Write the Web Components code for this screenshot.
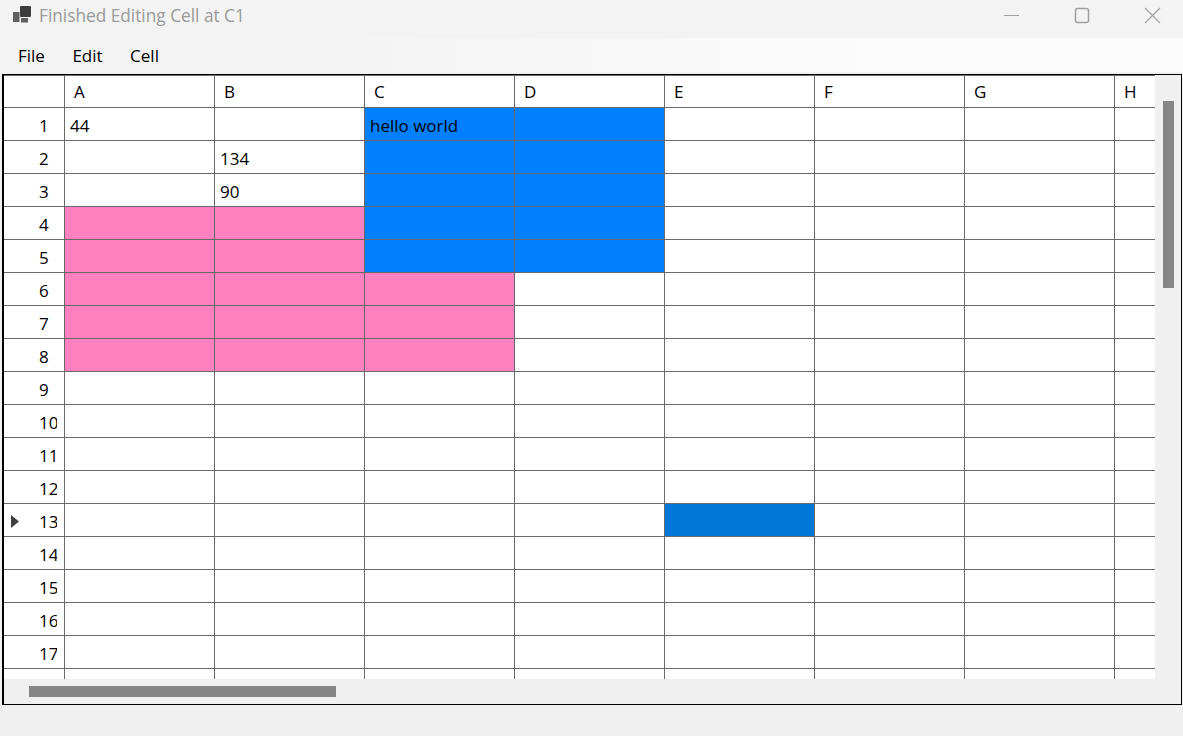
<!DOCTYPE html>
<html lang="en">
<head>
  <meta charset="UTF-8">
  <title>Finished Editing Cell at C1</title>
  <style>
    html, body { margin: 0; height: 100%; background: #f0f0f0; overflow: hidden; }
    body { font-family: "Open Sans", "Noto Sans", sans-serif; }
  </style>
</head>
<body>
  <app-window>
    <title-bar slot="title">Finished Editing Cell at C1</title-bar>
    <menu-bar slot="menu">
      <menu-item>File</menu-item>
      <menu-item>Edit</menu-item>
      <menu-item>Cell</menu-item>
    </menu-bar>
    <data-grid slot="body"></data-grid>
  </app-window>

  <script>
    class AppWindow extends HTMLElement {
      constructor() {
        super();
        this.attachShadow({ mode: 'open' });
        this.shadowRoot.innerHTML = `
          <style>
            :host { display: block; width: 1183px; height: 736px; background: #f0f0f0; }
            .frame { margin: 2px 2px 0 2px; }
          </style>
          <slot name="title"></slot>
          <slot name="menu"></slot>
          <div class="frame"><slot name="body"></slot></div>
        `;
      }
    }

    class TitleBar extends HTMLElement {
      constructor() {
        super();
        this.attachShadow({ mode: 'open' });
        this.shadowRoot.innerHTML = `
          <style>
            :host { display: flex; align-items: flex-start; height: 38px; background: #f3f3f3; color: #9a9a9a; font-size: 17.25px; }
            .logo { width: 18px; height: 18px; margin: 6px 8px 0 13px; flex: none; }
            .text { flex: 1; line-height: 32px; }
            .controls { display: flex; }
            .controls svg { width: 71px; height: 32px; display: block; }
          </style>
          <svg class="logo" viewBox="0 0 18 18">
            <rect x="0" y="6" width="6.5" height="10" fill="#5f5f5f"/>
            <rect x="7" y="0" width="11" height="11" rx="1" fill="#3d3d3d"/>
            <rect x="8" y="12" width="7" height="4.5" fill="#5f5f5f"/>
          </svg>
          <div class="text"><slot></slot></div>
          <div class="controls">
            <svg viewBox="0 0 71 32"><path d="M34 15.5h15" stroke="#a0a0a0" fill="none"/></svg>
            <svg viewBox="0 0 71 32"><rect x="34.5" y="8.5" width="13" height="14" rx="2" stroke="#a0a0a0" stroke-width="1.5" fill="none"/></svg>
            <svg viewBox="0 0 71 32"><path d="M33 8l15 15M48 8L33 23" stroke="#a0a0a0" stroke-width="1.2" fill="none"/></svg>
          </div>
        `;
      }
    }

    class MenuBar extends HTMLElement {
      constructor() {
        super();
        this.attachShadow({ mode: 'open' });
        this.shadowRoot.innerHTML = `
          <style>
            :host { display: flex; align-items: center; height: 34px; padding-left: 5px; background: linear-gradient(to right, #f3f3f3, #f3f3f3 25%, #fcfcfc 75%); }
          </style>
          <slot></slot>
        `;
      }
    }

    class MenuItem extends HTMLElement {
      constructor() {
        super();
        this.attachShadow({ mode: 'open' });
        this.shadowRoot.innerHTML = `
          <style>
            :host { display: block; padding: 0 14.5px 0 13px; font-size: 17px; color: #000; }
          </style>
          <slot></slot>
        `;
      }
    }

    // fills: column letter + row number -> colour
    const PINK = '#ff80bf', BLUE = '#0080ff', SELECTED = '#0078d7';
    const FILLS = { E13: SELECTED };
    for (const c of 'CD') for (let r = 1; r <= 5; r++) FILLS[c + r] = BLUE;
    for (const c of 'AB') for (let r = 4; r <= 8; r++) FILLS[c + r] = PINK;
    for (let r = 6; r <= 8; r++) FILLS['C' + r] = PINK;
    const VALUES = { A1: '44', C1: 'hello world', B2: '134', B3: '90' };

    class DataGrid extends HTMLElement {
      constructor() {
        super();
        this.attachShadow({ mode: 'open' });
      }

      connectedCallback() {
        this.render();
      }

      render() {
        const cols = 'ABCDEFGH'.split('');
        let cells = '<div class="corner"></div>';
        cols.forEach(c => { cells += `<div class="colhead">${c}</div>`; });
        for (let r = 1; r <= 18; r++) {
          const arrow = r === 13 ? '<svg class="arrow" viewBox="0 0 8 13"><path d="M0 0l8 6.5-8 6.5z" fill="#404040"/></svg>' : '';
          // row 18 is scrolled off before its label shows
          const label = r < 18 ? `<span>${r}</span>` : '';
          cells += `<div class="rowhead">${arrow}${label}</div>`;
          cols.forEach(c => {
            const fill = FILLS[c + r];
            cells += `<div class="cell"${fill ? ` style="background:${fill}"` : ''}>${VALUES[c + r] || ''}</div>`;
          });
        }
        this.shadowRoot.innerHTML = `
          <style>
            :host { display: grid; grid-template-columns: 1fr 26px; grid-template-rows: 1fr 25px; width: 1177px; height: 629px; border: 1px solid #000; border-left-width: 2px; background: #f0f0f0; }
            .view { overflow: hidden; background: #fff; border-top: 1px solid #696969; }
            .table { display: grid; grid-template-columns: 61px repeat(8, 150px); grid-template-rows: 32px; grid-auto-rows: 33px; width: max-content; font-size: 17px; color: #000; }
            .table > div { box-sizing: border-box; border-right: 1px solid #696969; border-bottom: 1px solid #696969; white-space: nowrap; display: flex; align-items: center; overflow: hidden; padding-top: 3px; }
            .table > .corner, .table > .colhead, .table > .rowhead { background: #fff; }
            .table > .colhead { padding-left: 9px; padding-top: 0; }
            .cell { padding-left: 5px; }
            .table > .rowhead { position: relative; padding-left: 35px; padding-right: 7px; }
            .rowhead span { display: block; overflow: hidden; }
            .arrow { position: absolute; left: 7px; top: 11px; width: 8px; height: 13px; }
            .vbar { padding: 26px 7px 0 8px; }
            .vbar div { width: 11px; height: 187px; background: #868686; }
            .hbar { padding: 7px 0 0 25px; }
            .hbar div { width: 307px; height: 11px; background: #868686; }
          </style>
          <div class="view"><div class="table">${cells}</div></div>
          <div class="vbar"><div></div></div>
          <div class="hbar"><div></div></div>
          <div></div>
        `;
      }
    }

    customElements.define('app-window', AppWindow);
    customElements.define('title-bar', TitleBar);
    customElements.define('menu-bar', MenuBar);
    customElements.define('menu-item', MenuItem);
    customElements.define('data-grid', DataGrid);
  </script>
</body>
</html>
